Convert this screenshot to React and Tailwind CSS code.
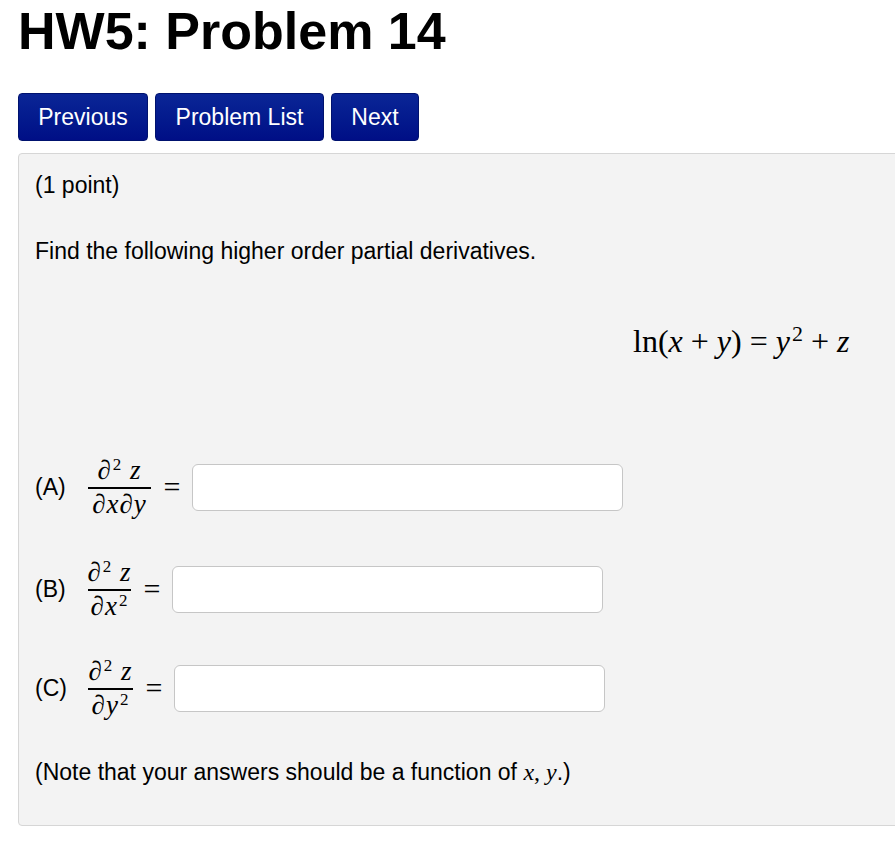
import React from "react";

const serif = { fontFamily: '"Liberation Serif", "DejaVu Serif", serif' };

const V = ({ children }) => <span className="italic">{children}</span>;

const Frac = ({ num, den, w }) => (
    <span className={`inline-flex ${w} min-w-0 shrink-0 flex-col items-center text-[27px] leading-none tracking-[1px]`} style={serif}>
        <span className="whitespace-nowrap pb-[3px]">{num}</span>
        <span className="h-[2px] w-full bg-black"></span>
        <span className="whitespace-nowrap pt-[2px]">{den}</span>
    </span>
);

const Part = ({ label, num, den, fracW, mt }) => (
    <div className={`flex h-[76px] items-center ${mt}`}>
        <span className="w-[53px] text-[23px]">{label}</span>
        <Frac num={num} den={den} w={fracW} />
        <span className="ml-[11px] mr-[10px] w-[20px] text-center text-[30px] leading-none" style={serif}>=</span>
        <div className="h-[47px] w-[431px] rounded-[6px] border border-[#c6c6c6] bg-white"></div>
    </div>
);

const Btn = ({ children, w }) => (
    <button className={`h-[48px] ${w} rounded-[4px] border border-[#00126e] bg-gradient-to-b from-[#0b2596] to-[#000e86] text-[23px] text-white`}>
        {children}
    </button>
);

const sq = <sup className="ml-[1px] text-[17px]">2</sup>;

export default function App() {
    return (
        <div className="min-h-[843px] overflow-hidden bg-white pl-[18px] text-black" style={{ fontFamily: '"Liberation Sans", Arial, sans-serif' }}>
            <h1 className="mt-[5px] text-[52px] font-bold leading-none">HW5: Problem 14</h1>

            <div className="mt-[36px] flex gap-[7px]">
                <Btn w="w-[130px]">Previous</Btn>
                <Btn w="w-[169px]">Problem List</Btn>
                <Btn w="w-[88px]">Next</Btn>
            </div>

            <div className="mt-[12px] h-[673px] w-[900px] rounded-[4px] border border-[#d6d6d6] bg-[#f3f3f3] pl-[16px] pt-[18px]">
                <p className="text-[23px] leading-[26px]">(1 point)</p>
                <p className="mt-[40px] text-[23px] leading-[26px]">Find the following higher order partial derivatives.</p>

                <div className="mt-[61px] pl-[598px] text-[32px] leading-none" style={serif}>
                    ln(<V>x</V> + <V>y</V>) = <V>y</V><sup className="ml-[2px] text-[22px]">2</sup> + <V>z</V>
                </div>

                <Part
                    label="(A)"
                    mt="mt-[92px]"
                    fracW="w-[63px]"
                    num={<>∂{sq} <V>z</V></>}
                    den={<>∂<V>x</V>∂<V>y</V></>}
                />
                <Part
                    label="(B)"
                    mt="mt-[26px]"
                    fracW="w-[43px]"
                    num={<>∂{sq} <V>z</V></>}
                    den={<>∂<V>x</V>{sq}</>}
                />
                <Part
                    label="(C)"
                    mt="mt-[23px]"
                    fracW="w-[45px]"
                    num={<>∂{sq} <V>z</V></>}
                    den={<>∂<V>y</V>{sq}</>}
                />

                <p className="mt-[33px] text-[23px] leading-[26px]">
                    (Note that your answers should be a function of{" "}
                    <span className="text-[24px]" style={serif}><V>x</V>, <V>y</V></span>.)
                </p>
            </div>
        </div>
    );
}
